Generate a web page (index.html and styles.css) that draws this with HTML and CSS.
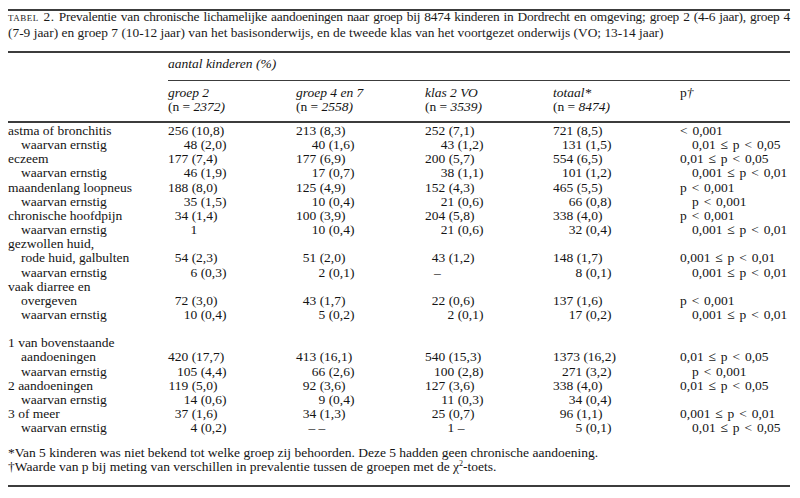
FILE: index.html
```html
<!DOCTYPE html>
<html lang="nl">
<head>
<meta charset="utf-8">
<title>Tabel 2</title>
<link rel="stylesheet" href="styles.css">
</head>
<body>
<div class="page">
  <div class="rule thick"></div>
  <div class="caption">
    <div class="cap-line first"><span class="sc">Tabel 2.</span> Prevalentie van chronische lichamelijke aandoeningen naar groep bij 8474 kinderen in Dordrecht en omgeving; groep 2 (4-6 jaar), groep 4</div>
    <div class="cap-line">(7-9 jaar) en groep 7 (10-12 jaar) van het basisonderwijs, en de tweede klas van het voortgezet onderwijs (VO; 13-14 jaar)</div>
  </div>
  <div class="rule thick"></div>

  <table class="data">
    <colgroup>
      <col class="c-label"><col class="c-num"><col class="c-num2"><col class="c-num"><col class="c-num3"><col class="c-p">
    </colgroup>
    <thead>
      <tr class="hrow1">
        <th></th>
        <th colspan="5" class="span-head">aantal kinderen (%)</th>
      </tr>
      <tr class="hrow2">
        <th></th>
        <th>groep 2<br><span class="up">(n = </span>2372)</th>
        <th>groep 4 en 7<br><span class="up">(n = </span>2558)</th>
        <th>klas 2 VO<br><span class="up">(n = </span>3539)</th>
        <th>totaal*<br><span class="up">(n = </span>8474)</th>
        <th><span class="up">p</span>&dagger;</th>
      </tr>
    </thead>
    <tbody>
      <tr><td>astma of bronchitis</td><td><span class="n">256</span> (10,8)</td><td><span class="n">213</span> (8,3)</td><td><span class="n">252</span> (7,1)</td><td><span class="n">721</span> (8,5)</td><td>&lt; 0,001</td></tr>
      <tr class="sub"><td>waarvan ernstig</td><td><span class="n">48</span> (2,0)</td><td><span class="n">40</span> (1,6)</td><td><span class="n">43</span> (1,2)</td><td><span class="n">131</span> (1,5)</td><td>0,01 ≤ p &lt; 0,05</td></tr>
      <tr><td>eczeem</td><td><span class="n">177</span> (7,4)</td><td><span class="n">177</span> (6,9)</td><td><span class="n">200</span> (5,7)</td><td><span class="n">554</span> (6,5)</td><td>0,01 ≤ p &lt; 0,05</td></tr>
      <tr class="sub"><td>waarvan ernstig</td><td><span class="n">46</span> (1,9)</td><td><span class="n">17</span> (0,7)</td><td><span class="n">38</span> (1,1)</td><td><span class="n">101</span> (1,2)</td><td>0,001 ≤ p &lt; 0,01</td></tr>
      <tr><td>maandenlang loopneus</td><td><span class="n">188</span> (8,0)</td><td><span class="n">125</span> (4,9)</td><td><span class="n">152</span> (4,3)</td><td><span class="n">465</span> (5,5)</td><td>p &lt; 0,001</td></tr>
      <tr class="sub"><td>waarvan ernstig</td><td><span class="n">35</span> (1,5)</td><td><span class="n">10</span> (0,4)</td><td><span class="n">21</span> (0,6)</td><td><span class="n">66</span> (0,8)</td><td>p &lt; 0,001</td></tr>
      <tr><td>chronische hoofdpijn</td><td><span class="n">34</span> (1,4)</td><td><span class="n">100</span> (3,9)</td><td><span class="n">204</span> (5,8)</td><td><span class="n">338</span> (4,0)</td><td>p &lt; 0,001</td></tr>
      <tr class="sub"><td>waarvan ernstig</td><td><span class="n">1</span></td><td><span class="n">10</span> (0,4)</td><td><span class="n">21</span> (0,6)</td><td><span class="n">32</span> (0,4)</td><td>0,001 ≤ p &lt; 0,01</td></tr>
      <tr><td>gezwollen huid,</td><td></td><td></td><td></td><td></td><td></td></tr>
      <tr><td class="ind">rode huid, galbulten</td><td><span class="n">54</span> (2,3)</td><td><span class="n">51</span> (2,0)</td><td><span class="n">43</span> (1,2)</td><td><span class="n">148</span> (1,7)</td><td>0,001 ≤ p &lt; 0,01</td></tr>
      <tr class="sub"><td>waarvan ernstig</td><td><span class="n">6</span> (0,3)</td><td><span class="n">2</span> (0,1)</td><td>&ndash;</td><td><span class="n">8</span> (0,1)</td><td>0,001 ≤ p &lt; 0,01</td></tr>
      <tr><td>vaak diarree en</td><td></td><td></td><td></td><td></td><td></td></tr>
      <tr><td class="ind">overgeven</td><td><span class="n">72</span> (3,0)</td><td><span class="n">43</span> (1,7)</td><td><span class="n">22</span> (0,6)</td><td><span class="n">137</span> (1,6)</td><td>p &lt; 0,001</td></tr>
      <tr class="sub"><td>waarvan ernstig</td><td><span class="n">10</span> (0,4)</td><td><span class="n">5</span> (0,2)</td><td><span class="n">2</span> (0,1)</td><td><span class="n">17</span> (0,2)</td><td>0,001 ≤ p &lt; 0,01</td></tr>
      <tr class="blank"><td></td><td></td><td></td><td></td><td></td><td></td></tr>
      <tr><td>1 van bovenstaande</td><td></td><td></td><td></td><td></td><td></td></tr>
      <tr><td class="ind">aandoeningen</td><td><span class="n">420</span> (17,7)</td><td><span class="n">413</span> (16,1)</td><td><span class="n">540</span> (15,3)</td><td><span class="n">1373</span> (16,2)</td><td>0,01 ≤ p &lt; 0,05</td></tr>
      <tr class="sub"><td>waarvan ernstig</td><td><span class="n">105</span> (4,4)</td><td><span class="n">66</span> (2,6)</td><td><span class="n">100</span> (2,8)</td><td><span class="n">271</span> (3,2)</td><td>p &lt; 0,001</td></tr>
      <tr><td>2 aandoeningen</td><td><span class="n">119</span> (5,0)</td><td><span class="n">92</span> (3,6)</td><td><span class="n">127</span> (3,6)</td><td><span class="n">338</span> (4,0)</td><td>0,01 ≤ p &lt; 0,05</td></tr>
      <tr class="sub"><td>waarvan ernstig</td><td><span class="n">14</span> (0,6)</td><td><span class="n">9</span> (0,4)</td><td><span class="n">11</span> (0,3)</td><td><span class="n">34</span> (0,4)</td><td></td></tr>
      <tr><td>3 of meer</td><td><span class="n">37</span> (1,6)</td><td><span class="n">34</span> (1,3)</td><td><span class="n">25</span> (0,7)</td><td><span class="n">96</span> (1,1)</td><td>0,001 ≤ p &lt; 0,01</td></tr>
      <tr class="sub"><td>waarvan ernstig</td><td><span class="n">4</span> (0,2)</td><td><span class="n">&ndash; &ndash;</span></td><td><span class="n">1</span> &ndash;</td><td><span class="n">5</span> (0,1)</td><td>0,01 ≤ p &lt; 0,05</td></tr>
    </tbody>
  </table>

  <div class="notes">
    <p>*Van 5 kinderen was niet bekend tot welke groep zij behoorden. Deze 5 hadden geen chronische aandoening.</p>
    <p>&dagger;Waarde van p bij meting van verschillen in prevalentie tussen de groepen met de &chi;<sup>2</sup>-toets.</p>
  </div>
  <div class="rule thick"></div>
</div>
</body>
</html>
```
FILE: styles.css
```css
html, body {
  margin: 0;
  padding: 0;
  background: #ffffff;
}

body {
  font-family: "Liberation Serif", "Times New Roman", serif;
  color: #141414;
}

.page {
  width: 782px;
  padding: 9px 10px 0 8px;
}

.rule {
  border-top: 2px solid #3c3c3c;
}

.caption {
  font-size: 13.4px;
  line-height: 16px;
  margin-top: -2px;
  padding: 0 0 10px;
  color: #1a1a1a;
}

.cap-line.first {
  white-space: nowrap;
  letter-spacing: -0.22px;
  text-align: justify;
  text-align-last: justify;
}

.sc {
  font-variant: small-caps;
  text-transform: lowercase;
  letter-spacing: 0.5px;
}

.data {
  width: 782px;
  border-collapse: separate;
  border-spacing: 0;
  table-layout: fixed;
  font-size: 13.5px;
  line-height: 14.15px;
}

.c-label { width: 160px; }
.c-num { width: 128px; }
.c-num2 { width: 129px; }
.c-num3 { width: 127px; }
.c-p { width: 110px; }

.data th,
.data td {
  padding: 0;
  text-align: left;
  vertical-align: top;
  white-space: nowrap;
}

.data td:last-child {
  word-spacing: 1.5px;
}

.data th {
  font-weight: normal;
  font-style: italic;
  line-height: 14px;
}

.data .hrow1 th {
  padding-top: 4px;
  padding-bottom: 9px;
}

.data th.span-head {
  border-bottom: 1px solid #3c3c3c;
}

.data .hrow2 th {
  padding-top: 5px;
  padding-bottom: 7px;
  border-bottom: 2px solid #3c3c3c;
}

.up {
  font-style: normal;
}

.n {
  display: inline-block;
  min-width: 1.5em;
  text-align: right;
}

.data .sub td {
  padding-left: 9px;
}

.data .sub td:first-child,
.data td.ind {
  padding-left: 13px;
}

.data .sub td:last-child {
  padding-left: 12px;
}

.data tbody tr:first-child td {
  padding-top: 1px;
}

.data .blank td {
  height: 14.15px;
}

.notes {
  font-size: 13.5px;
  line-height: 14px;
  padding: 11px 0 11px;
}

.notes p {
  margin: 0;
}

.notes sup {
  font-size: 8px;
  line-height: 0;
  vertical-align: 5px;
}
```
